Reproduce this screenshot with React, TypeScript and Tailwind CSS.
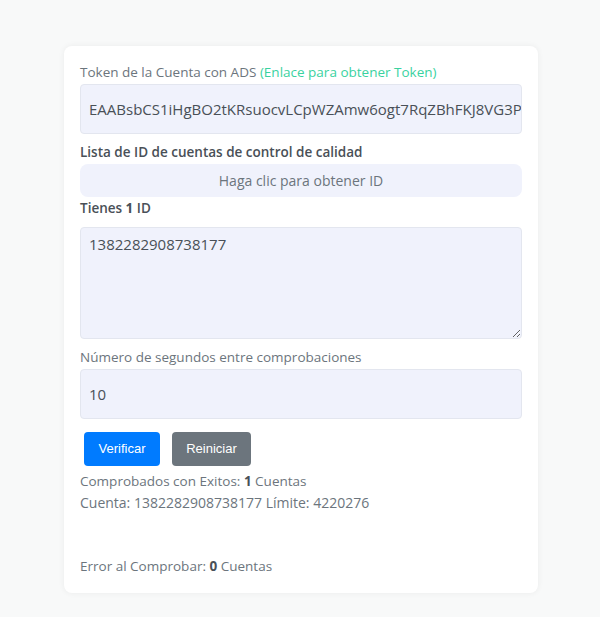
import React from 'react';

export default function App() {
  const font = { fontFamily: '"Open Sans", "Noto Sans", sans-serif' };

  return (
    <div className="min-h-screen bg-[#f8f9f9] pt-[46px] pb-6" style={font}>
      <div className="mx-auto w-[474px] translate-x-[1px] rounded-lg bg-white px-4 pt-4 pb-4 shadow-[0_0_6px_rgba(0,0,0,0.06)]">
        {/* Token */}
        <p className="text-[13.5px] leading-[21px] text-[#6c757d]">
          Token de la Cuenta con ADS{' '}
          <a className="text-[#3ad29f]">(Enlace para obtener Token)</a>
        </p>
        <div className="mt-[1px] flex h-[50px] items-center overflow-hidden whitespace-nowrap rounded-[4px] border border-[#e3e6ef] bg-[#f0f2fc] px-2 text-[15px] text-[#495057]">
          EAABsbCS1iHgBO2tKRsuocvLCpWZAmw6ogt7RqZBhFKJ8VG3P
        </div>

        {/* Lista de IDs */}
        <p className="mt-2 text-[13.5px] font-semibold leading-[21px] text-[#495057]">
          Lista de ID de cuentas de control de calidad
        </p>
        <button className="mt-[1px] flex h-[33px] w-full items-center justify-center rounded-lg bg-[#f0f2fc] text-[14px] text-[#6c757d]">
          Haga clic para obtener ID
        </button>
        <p className="mt-[1px] text-[13.5px] font-semibold leading-[21px] text-[#495057]">
          Tienes <span className="font-bold">1</span> ID
        </p>
        <textarea
          readOnly
          defaultValue="1382282908738177"
          className="mt-2 block h-[112px] w-full rounded-[4px] border border-[#e3e6ef] bg-[#f0f2fc] px-2 py-[6px] text-[15px] leading-[21px] text-[#495057] outline-none"
        />

        {/* Segundos */}
        <p className="mt-2 text-[13.5px] leading-[21px] text-[#6c757d]">
          Número de segundos entre comprobaciones
        </p>
        <div className="mt-[1px] flex h-[50px] items-center rounded-[4px] border border-[#e3e6ef] bg-[#f0f2fc] px-2 text-[15px] text-[#495057]">
          10
        </div>

        {/* Botones */}
        <div
          className="mt-[13px] ml-1 flex gap-3 text-[13px]"
          style={{ fontFamily: '"Liberation Sans", Arial, sans-serif' }}
        >
          <button className="h-[34px] w-[76px] rounded-[4px] bg-[#007bff] text-white">
            Verificar
          </button>
          <button className="h-[34px] w-[79px] rounded-[4px] bg-[#6c757d] text-white">
            Reiniciar
          </button>
        </div>

        {/* Resultados */}
        <div className="mt-[5px] text-[14px] leading-[21px] text-[#6c757d]">
          <p className="text-[13.5px]">
            Comprobados con Exitos: <span className="font-bold text-[#495057]">1</span> Cuentas
          </p>
          <p>Cuenta: 1382282908738177 Límite: 4220276</p>
        </div>
        <p className="mt-[43px] text-[13.5px] leading-[21px] text-[#6c757d]">
          Error al Comprobar: <span className="font-bold text-[#495057]">0</span> Cuentas
        </p>
      </div>
    </div>
  );
}
